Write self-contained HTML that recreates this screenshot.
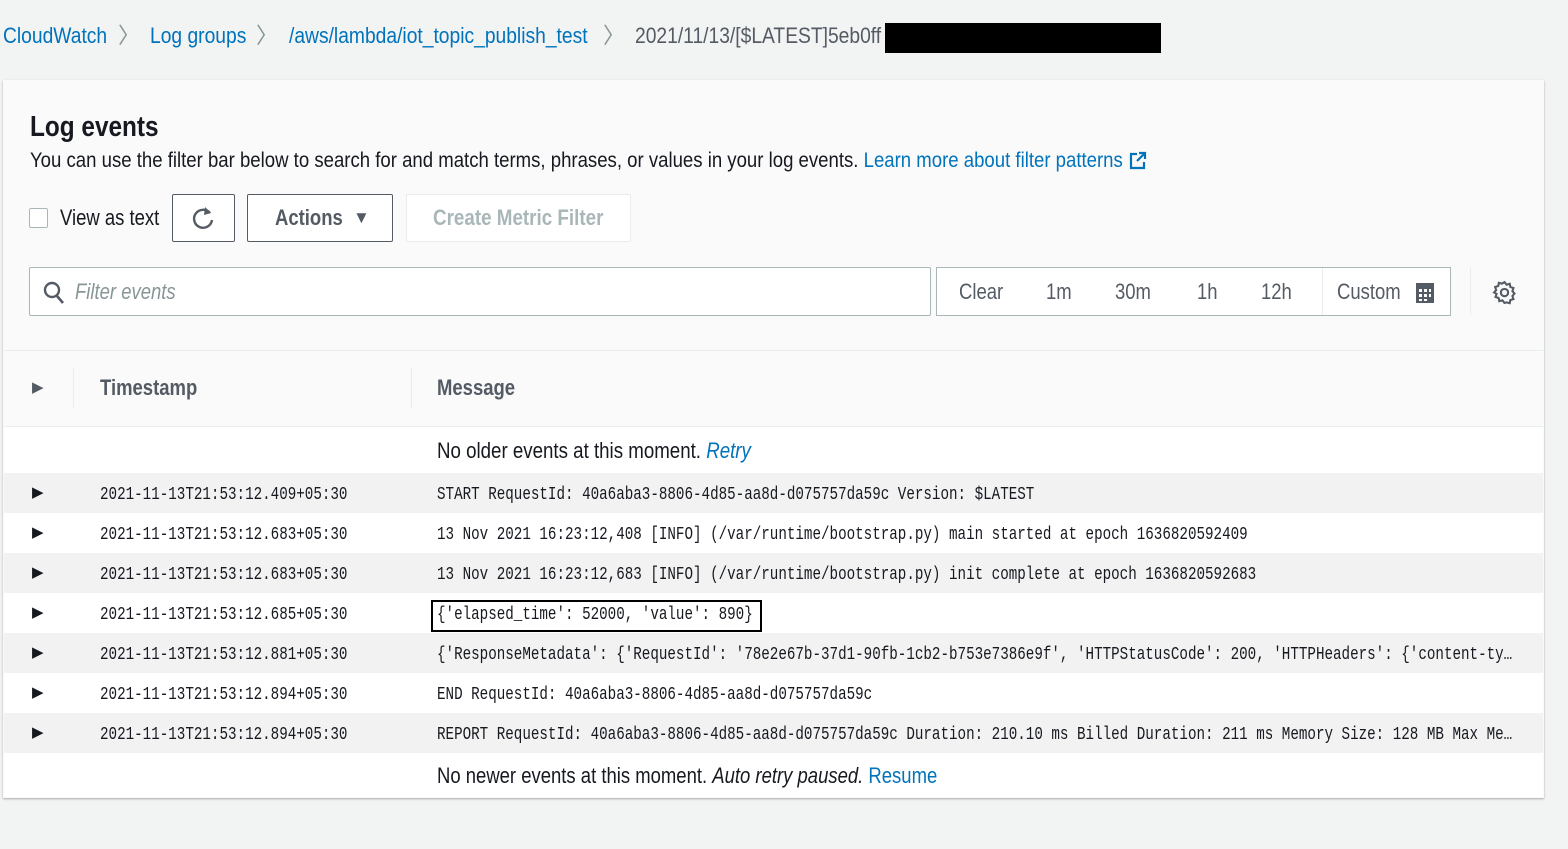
<!DOCTYPE html>
<html><head><meta charset="utf-8"><style>
body{margin:0;width:1568px;height:849px;background:#f2f3f3;position:relative;overflow:hidden;font-family:"Liberation Sans",sans-serif;color:#16191f}
.a{position:absolute;white-space:nowrap;line-height:30px;transform-origin:0 50%}
.s{transform:scaleX(.84)}
.b{transform:scaleX(.875)}
.m{font-family:"Liberation Mono",monospace;font-size:18px;transform:scaleX(.79);color:#16191f}
.l{color:#0073bb}
.box{position:absolute;box-sizing:border-box}
</style></head><body>
<div class="a b" style="left:3px;top:21px;font-size:22px"><span class="l">CloudWatch</span></div>
<div class="a" style="left:118px;top:21px;font-size:22px;color:#879596">&#x232A;</div>
<div class="a b" style="left:150px;top:21px;font-size:22px"><span class="l">Log groups</span></div>
<div class="a" style="left:256px;top:21px;font-size:22px;color:#879596">&#x232A;</div>
<div class="a b" style="left:289px;top:21px;font-size:22px"><span class="l">/aws/lambda/iot_topic_publish_test</span></div>
<div class="a" style="left:603px;top:21px;font-size:22px;color:#879596">&#x232A;</div>
<div class="a b" style="left:635px;top:21px;font-size:22px;color:#545b64">2021/11/13/[$LATEST]5eb0ff</div>
<div class="box" style="left:885px;top:23px;width:276px;height:30px;background:#000"></div>

<div class="box" style="left:3px;top:80px;width:1541px;height:718px;background:#fafafa;box-shadow:0 1px 2px rgba(0,0,0,.3)"></div>
<div class="a s" style="left:30px;top:112px;font-size:29px;font-weight:bold;color:#16191f">Log events</div>
<div class="a" style="left:30px;top:145px;font-size:21.5px;transform:scaleX(.864)">You can use the filter bar below to search for and match terms, phrases, or values in your log events. <span class="l">Learn more about filter patterns</span></div>
<svg class="box" style="left:1129px;top:151px" width="18" height="19" viewBox="0 0 18 19"><path d="M8 3H2v14h13v-6M10 2h6v6M16 2L8 10" fill="none" stroke="#0073bb" stroke-width="2.2"/></svg>

<div class="box" style="left:29px;top:208px;width:19px;height:20px;border:1px solid #aab7b8;border-radius:2px;background:#fff"></div>
<div class="a s" style="left:60px;top:203px;font-size:22px">View as text</div>
<div class="box" style="left:172px;top:194px;width:63px;height:48px;border:1px solid #545b64;border-radius:2px;background:#fff"></div>
<svg class="box" style="left:191px;top:204px" width="25" height="28" viewBox="0 0 25 28"><path d="M19 9A9 9 0 1 0 21 16" fill="none" stroke="#545b64" stroke-width="2.4"/><path d="M14 3l6 6-7 2z" fill="#545b64"/></svg>
<div class="box" style="left:247px;top:194px;width:146px;height:48px;border:1px solid #545b64;border-radius:2px;background:#fff"></div>
<div class="a s" style="left:275px;top:203px;font-size:22px;font-weight:bold;color:#545b64">Actions</div>
<div class="a" style="left:353px;top:203px;font-size:17px;color:#545b64">&#9660;</div>
<div class="box" style="left:406px;top:194px;width:225px;height:48px;border:1px solid #eaeded;border-radius:2px;background:#fff"></div>
<div class="a" style="left:433px;top:203px;font-size:22px;font-weight:bold;color:#aab7b8;transform:scaleX(.855)">Create Metric Filter</div>

<div class="box" style="left:29px;top:267px;width:902px;height:49px;border:1px solid #aab7b8;border-radius:2px;background:#fff"></div>
<svg class="box" style="left:42px;top:280px" width="24" height="26" viewBox="0 0 24 26"><circle cx="10" cy="10" r="7" fill="none" stroke="#545b64" stroke-width="2.4"/><path d="M15 16l6 7" stroke="#545b64" stroke-width="2.6"/></svg>
<div class="a s" style="left:75px;top:277px;font-size:22px;font-style:italic;color:#879596">Filter events</div>
<div class="box" style="left:936px;top:267px;width:515px;height:49px;border:1px solid #aab7b8;background:#fff"></div>
<div class="box" style="left:1322px;top:268px;width:1px;height:47px;background:#eaeded"></div>
<div class="a s" style="left:959px;top:277px;font-size:22px;color:#545b64">Clear</div>
<div class="a s" style="left:1046px;top:277px;font-size:22px;color:#545b64">1m</div>
<div class="a s" style="left:1115px;top:277px;font-size:22px;color:#545b64">30m</div>
<div class="a s" style="left:1197px;top:277px;font-size:22px;color:#545b64">1h</div>
<div class="a s" style="left:1261px;top:277px;font-size:22px;color:#545b64">12h</div>
<div class="a s" style="left:1337px;top:277px;font-size:22px;color:#545b64">Custom</div>
<svg class="box" style="left:1415px;top:282px" width="20" height="22" viewBox="0 0 20 22"><rect x="1" y="1" width="18" height="20" fill="#545b64"/><g fill="#fff"><rect x="4" y="7" width="3" height="3"/><rect x="9" y="7" width="3" height="3"/><rect x="14" y="7" width="2" height="3"/><rect x="4" y="12" width="3" height="3"/><rect x="9" y="12" width="3" height="3"/><rect x="14" y="12" width="2" height="3"/><rect x="4" y="17" width="3" height="2"/><rect x="9" y="17" width="3" height="2"/></g></svg>
<div class="box" style="left:1470px;top:268px;width:1px;height:47px;background:#eaeded"></div>
<svg class="box" style="left:1492px;top:280px" width="25" height="25" viewBox="0 0 24 24"><path d="M12 2l2 2.5 3-.8.6 3 3 1-1 3 2 2.3-2 2.3 1 3-3 1-.6 3-3-.8L12 22l-2-2.5-3 .8-.6-3-3-1 1-3L2 12l2-2.3-1-3 3-1 .6-3 3 .8z" fill="none" stroke="#545b64" stroke-width="2"/><circle cx="12" cy="12" r="3.5" fill="none" stroke="#545b64" stroke-width="2"/></svg>

<div class="box" style="left:4px;top:350px;width:1539px;height:1px;background:#eaeded"></div>
<div class="box" style="left:4px;top:426px;width:1539px;height:1px;background:#eaeded"></div>
<div class="a" style="left:32px;top:373px;font-size:15px;color:#545b64">&#9654;</div>
<div class="box" style="left:73px;top:368px;width:1px;height:40px;background:#eaeded"></div>
<div class="box" style="left:411px;top:368px;width:1px;height:40px;background:#eaeded"></div>
<div class="a s" style="left:100px;top:373px;font-size:22px;font-weight:bold;color:#545b64">Timestamp</div>
<div class="a s" style="left:437px;top:373px;font-size:22px;font-weight:bold;color:#545b64">Message</div>

<div class="box" style="left:4px;top:427px;width:1539px;height:370px;background:#fff"></div>
<div class="a" style="left:437px;top:436px;font-size:22px;transform:scaleX(.85)">No older events at this moment. <i class="l">Retry</i></div>

<div class="box" style="left:4px;top:473px;width:1539px;height:40px;background:#f2f2f2"></div>
<div class="box" style="left:4px;top:553px;width:1539px;height:40px;background:#f2f2f2"></div>
<div class="box" style="left:4px;top:633px;width:1539px;height:40px;background:#f2f2f2"></div>
<div class="box" style="left:4px;top:713px;width:1539px;height:40px;background:#f2f2f2"></div>

<div class="a" style="left:32px;top:478px;font-size:15px;color:#16191f">&#9654;</div>
<div class="a" style="left:32px;top:518px;font-size:15px;color:#16191f">&#9654;</div>
<div class="a" style="left:32px;top:558px;font-size:15px;color:#16191f">&#9654;</div>
<div class="a" style="left:32px;top:598px;font-size:15px;color:#16191f">&#9654;</div>
<div class="a" style="left:32px;top:638px;font-size:15px;color:#16191f">&#9654;</div>
<div class="a" style="left:32px;top:678px;font-size:15px;color:#16191f">&#9654;</div>
<div class="a" style="left:32px;top:718px;font-size:15px;color:#16191f">&#9654;</div>

<div class="a m" style="left:100px;top:480px">2021-11-13T21:53:12.409+05:30</div>
<div class="a m" style="left:100px;top:520px">2021-11-13T21:53:12.683+05:30</div>
<div class="a m" style="left:100px;top:560px">2021-11-13T21:53:12.683+05:30</div>
<div class="a m" style="left:100px;top:600px">2021-11-13T21:53:12.685+05:30</div>
<div class="a m" style="left:100px;top:640px">2021-11-13T21:53:12.881+05:30</div>
<div class="a m" style="left:100px;top:680px">2021-11-13T21:53:12.894+05:30</div>
<div class="a m" style="left:100px;top:720px">2021-11-13T21:53:12.894+05:30</div>

<div class="a m" style="left:437px;top:480px">START RequestId: 40a6aba3-8806-4d85-aa8d-d075757da59c Version: $LATEST</div>
<div class="a m" style="left:437px;top:520px">13 Nov 2021 16:23:12,408 [INFO] (/var/runtime/bootstrap.py) main started at epoch 1636820592409</div>
<div class="a m" style="left:437px;top:560px">13 Nov 2021 16:23:12,683 [INFO] (/var/runtime/bootstrap.py) init complete at epoch 1636820592683</div>
<div class="box" style="left:431px;top:600px;width:331px;height:32px;border:2px solid #000"></div>
<div class="a m" style="left:437px;top:600px">{'elapsed_time': 52000, 'value': 890}</div>
<div class="a m" style="left:437px;top:640px">{'ResponseMetadata': {'RequestId': '78e2e67b-37d1-90fb-1cb2-b753e7386e9f', 'HTTPStatusCode': 200, 'HTTPHeaders': {'content-ty…</div>
<div class="a m" style="left:437px;top:680px">END RequestId: 40a6aba3-8806-4d85-aa8d-d075757da59c</div>
<div class="a m" style="left:437px;top:720px">REPORT RequestId: 40a6aba3-8806-4d85-aa8d-d075757da59c Duration: 210.10 ms Billed Duration: 211 ms Memory Size: 128 MB Max Me…</div>

<div class="a s" style="left:437px;top:761px;font-size:22px">No newer events at this moment. <i>Auto retry paused.</i> <span class="l">Resume</span></div>
</body></html>
